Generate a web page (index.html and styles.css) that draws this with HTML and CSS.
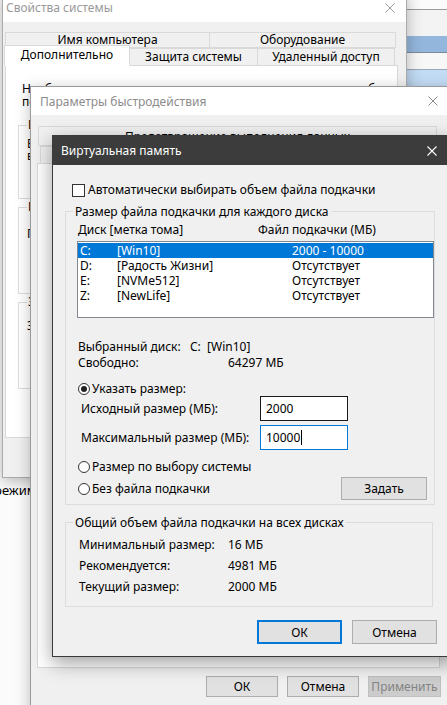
FILE: index.html
```html
<!DOCTYPE html>
<html lang="ru">
<head>
<meta charset="utf-8">
<title>Виртуальная память</title>
<link rel="stylesheet" href="styles.css">
</head>
<body>
<div class="desk">

  <div class="back-left"><span class="back-text">режим</span></div>

  <div class="back-right">
    <div class="strip strip-white"></div>
    <div class="strip strip-gray"></div>
    <div class="strip strip-blue"></div>
    <div class="strip strip-white2"></div>
    <div class="strip strip-lightblue"></div>
  </div>

  <!-- Свойства системы -->
  <div class="win win-sys">
    <div class="titlebar titlebar-inactive">
      <span class="title">Свойства системы</span>
      <svg class="close close-sys" width="10" height="10" viewBox="0 0 10 10"><path d="M0.5 0.5L9.5 9.5M9.5 0.5L0.5 9.5" stroke="#9a9a9a" stroke-width="1" fill="none"/></svg>
    </div>
    <div class="sys-body">
      <div class="tabrow tabrow-1">
        <div class="tab tab-name">Имя компьютера</div>
        <div class="tab tab-hw">Оборудование</div>
      </div>
      <div class="tabrow tabrow-2">
        <div class="tab tab-adv tab-selected">Дополнительно</div>
        <div class="tab tab-prot">Защита системы</div>
        <div class="tab tab-remote">Удаленный доступ</div>
      </div>
      <div class="sys-panel">
        <p class="sys-note">Необходимо иметь права администратора для изменения большинства<br>перечисленных параметров.</p>
        <fieldset class="sys-group sys-group-1">
          <legend>Быстродействие</legend>
          <p>Визуальные эффекты, использование процессора, оперативной и<br>виртуальной памяти</p>
        </fieldset>
        <fieldset class="sys-group sys-group-2">
          <legend>Профили пользователей</legend>
          <p>Параметры рабочего стола, относящиеся ко входу в систему</p>
        </fieldset>
        <fieldset class="sys-group sys-group-3">
          <legend>Загрузка и восстановление</legend>
          <p>Загрузка и восстановление системы, отладочная информация</p>
        </fieldset>
      </div>
    </div>
  </div>

  <!-- Параметры быстродействия -->
  <div class="win win-perf">
    <div class="titlebar titlebar-inactive perf-title">
      <span class="title">Параметры быстродействия</span>
      <svg class="close close-perf" width="10" height="10" viewBox="0 0 10 10"><path d="M0.5 0.5L9.5 9.5M9.5 0.5L0.5 9.5" stroke="#8a8a8a" stroke-width="1" fill="none"/></svg>
    </div>
    <div class="perf-body">
      <div class="tab perf-tab-top">Предотвращение выполнения данных</div>
      <div class="tabrow perf-tabrow">
        <div class="tab perf-tab-vis">Визуальные эффекты</div>
        <div class="tab perf-tab-adv tab-selected">Дополнительно</div>
      </div>
      <div class="perf-panel"></div>
      <div class="perf-buttons">
        <button class="btn perf-btn">ОК</button>
        <button class="btn perf-btn">Отмена</button>
        <button class="btn perf-btn perf-btn-apply btn-disabled">Применить</button>
      </div>
    </div>
  </div>

  <!-- Виртуальная память -->
  <div class="win win-vm">
    <div class="titlebar vm-title">
      <span class="title">Виртуальная память</span>
      <svg class="close close-vm" width="10" height="10" viewBox="0 0 10 10"><path d="M0.5 0.5L9.5 9.5M9.5 0.5L0.5 9.5" stroke="#ffffff" stroke-width="1.1" fill="none"/></svg>
    </div>
    <div class="vm-body">
      <div class="check-row">
        <span class="checkbox"></span>
        <span class="check-label">Автоматически выбирать объем файла подкачки</span>
      </div>

      <fieldset class="group group-disks">
        <legend>Размер файла подкачки для каждого диска</legend>
        <div class="list-head">
          <span class="col-disk-head">Диск [метка тома]</span>
          <span>Файл подкачки (МБ)</span>
        </div>
        <div class="listbox">
          <div class="list-row list-row-selected"><span>C:</span><span>[Win10]</span><span>2000 - 10000</span></div>
          <div class="list-row"><span>D:</span><span>[Радость Жизни]</span><span>Отсутствует</span></div>
          <div class="list-row"><span>E:</span><span>[NVMe512]</span><span>Отсутствует</span></div>
          <div class="list-row"><span>Z:</span><span>[NewLife]</span><span>Отсутствует</span></div>
        </div>

        <div class="info-row info-row-first">
          <span class="info-label-sel">Выбранный диск:</span>
          <span>C:&nbsp;&nbsp;[Win10]</span>
        </div>
        <div class="info-row">
          <span class="info-label-free">Свободно:</span>
          <span>64297 МБ</span>
        </div>

        <div class="radio-row radio-row-custom">
          <span class="radio radio-on"></span>
          <span class="radio-label">Указать размер:</span>
        </div>
        <div class="field-row field-row-initial">
          <span class="field-label">Исходный размер (МБ):</span>
          <div class="input input-hover">2000</div>
        </div>
        <div class="field-row field-row-max">
          <span class="field-label">Максимальный размер (МБ):</span>
          <div class="input input-focus">10000<span class="caret"></span></div>
        </div>

        <div class="bottom-area">
          <div class="radio-col">
            <div class="radio-row radio-row-low">
              <span class="radio"></span>
              <span class="radio-label">Размер по выбору системы</span>
            </div>
            <div class="radio-row radio-row-low">
              <span class="radio"></span>
              <span class="radio-label">Без файла подкачки</span>
            </div>
          </div>
          <button class="btn set-btn">Задать</button>
        </div>
      </fieldset>

      <fieldset class="group group-total">
        <legend>Общий объем файла подкачки на всех дисках</legend>
        <div class="total-row total-row-first"><span class="total-label">Минимальный размер:</span><span>16 МБ</span></div>
        <div class="total-row"><span class="total-label">Рекомендуется:</span><span>4981 МБ</span></div>
        <div class="total-row"><span class="total-label">Текущий размер:</span><span>2000 МБ</span></div>
      </fieldset>

      <div class="vm-buttons">
        <button class="btn vm-btn btn-default">ОК</button>
        <button class="btn vm-btn">Отмена</button>
      </div>
    </div>
  </div>

</div>
</body>
</html>
```

FILE: styles.css
```css
* { box-sizing: border-box; }

html, body {
  margin: 0;
  padding: 0;
}

body {
  width: 447px;
  height: 705px;
  overflow: hidden;
  font-family: "Noto Sans", "DejaVu Sans", sans-serif;
  font-size: 12px;
  color: #000;
  background: #fbfbfb;
}

p { margin: 0; }

.desk {
  position: relative;
  width: 447px;
  height: 705px;
  overflow: hidden;
  background: #fbfbfb;
}

/* ---------- background windows ---------- */
.back-left {
  position: absolute;
  z-index: 0;
  left: 0;
  top: 478px;
  width: 80px;
  height: 227px;
  background: #fbfbfb;
  padding-top: 4px;
  font-size: 13px;
  line-height: 16px;
  white-space: nowrap;
}
.back-text { display: inline-block; margin-left: -6px; }

.back-right {
  position: absolute;
  z-index: 0;
  left: 400px;
  top: 0;
  width: 60px;
  height: 90px;
  display: flex;
  flex-direction: column;
}
.strip { width: 100%; }
.strip-white { height: 10px; background: #fbfbfb; border-bottom: 1px solid #9c9c9c; }
.strip-gray { height: 26px; background: #f3f3f3; }
.strip-blue { height: 17px; background: #93b6dc; border-bottom: 1px solid #7f8a96; }
.strip-white2 { height: 17px; background: #f7f7f7; border-bottom: 1px solid #9aa6b4; }
.strip-lightblue { height: 20px; background: #c3dcf6; }

/* ---------- generic window ---------- */
.win {
  position: absolute;
  display: flex;
  flex-direction: column;
  background: #f0f0f0;
}

.titlebar {
  display: flex;
  align-items: center;
  justify-content: space-between;
  flex: none;
  white-space: nowrap;
}
.titlebar-inactive { background: #fff; color: #999; }
.title { font-size: 12px; }
.close { display: block; flex: none; }

.tabrow { display: flex; align-items: flex-end; }
.tab {
  background: #f0f0f0;
  border: 1px solid #d9d9d9;
  text-align: center;
  white-space: nowrap;
  line-height: 14px;
}
.tab-selected {
  background: #fff;
  border-bottom-color: #fff;
}

.btn {
  font-family: inherit;
  font-size: 12px;
  color: #000;
  background: #e1e1e1;
  border: 1px solid #adadad;
  padding: 0;
  margin: 0;
}
.btn-disabled { background: #cccccc; border-color: #bfbfbf; color: #838383; }
.btn-default { border: 2px solid #0078d7; }

/* ---------- Свойства системы ---------- */
.win-sys {
  z-index: 1;
  left: 2px;
  top: -8px;
  width: 405px;
  height: 486px;
  border: 1px solid #aaaaaa;
  box-shadow: 0 3px 14px rgba(0, 0, 0, 0.28);
}
.win-sys .titlebar { height: 29px; padding-left: 3px; }
.close-sys { margin-right: 11px; }

.sys-body { padding-left: 2px; }
.tabrow-1 { margin-top: 10px; height: 16px; }
.tabrow-1 .tab { height: 16px; }
.tab-name { width: 205px; }
.tab-hw { width: 187px; margin-left: -1px; }

.tabrow-2 { margin-top: -1px; height: 19px; }
.tabrow-2 .tab { height: 18px; line-height: 16px; }
.tab-adv { width: 126px; height: 21px !important; margin-left: -1px; position: relative; z-index: 1; line-height: 18px !important; }
.tab-prot { width: 129px; margin-left: -1px; }
.tab-remote { width: 138px; margin-left: -1px; }

.sys-panel {
  margin-top: -1px;
  width: 393px;
  height: 373px;
  background: #fff;
  border: 1px solid #d9d9d9;
  padding: 16px 0 0 12px;
  white-space: nowrap;
}
.sys-note { line-height: 13px; padding-left: 4px; }

.sys-group {
  margin: 0;
  width: 372px;
  border: 1px solid #dcdcdc;
  padding: 6px 0 0 8px;
  line-height: 12px;
}
.sys-group legend { padding: 0 1px; margin-left: 0; line-height: 14px; }
.sys-group-1 { margin-top: 10px; height: 81px; }
.sys-group-2 { margin-top: 1px; height: 94px; padding-top: 14px; }
.sys-group-3 { margin-top: 1px; height: 94px; padding-top: 11px; }

/* ---------- Параметры быстродействия ---------- */
.win-perf {
  z-index: 2;
  left: 30px;
  top: 86px;
  width: 425px;
  height: 640px;
  border: 1px solid #9a9a9a;
  box-shadow: 0 3px 14px rgba(0, 0, 0, 0.25);
}
.perf-title { height: 28px; padding-left: 9px; color: #8c8c8c; }
.close-perf { margin-right: 16px; }

.perf-body { display: flex; flex-direction: column; }
.perf-tab-top {
  margin: 11px 0 0 7px;
  width: 399px;
  height: 20px;
  line-height: 19px;
}
.perf-tabrow { margin: -1px 0 0 9px; height: 19px; }
.perf-tabrow .tab { height: 18px; line-height: 16px; }
.perf-tab-vis { width: 150px; }
.perf-tab-adv { width: 130px; margin-left: -1px; height: 20px !important; position: relative; z-index: 1; }

.perf-panel {
  margin: -1px 0 0 6px;
  width: 403px;
  height: 505px;
  background: #fff;
  border: 1px solid #d9d9d9;
}
.perf-buttons {
  margin-top: 8px;
  width: 410px;
  display: flex;
  justify-content: flex-end;
  gap: 9px;
}
.perf-btn { width: 72px; height: 21px; }
.perf-btn-apply { width: 73px; }

/* ---------- Виртуальная память ---------- */
.win-vm {
  z-index: 3;
  left: 52px;
  top: 135px;
  width: 404px;
  height: 522px;
  border: 1px solid #3a3a3a;
  box-shadow: 0 6px 18px rgba(0, 0, 0, 0.38);
}
.vm-title {
  height: 29px;
  background: #3c3c3c;
  color: #fff;
  padding-left: 8px;
}
.close-vm { margin-right: 18px; }

.vm-body { padding-left: 12px; display: flex; flex-direction: column; }

.check-row {
  margin-top: 17px;
  height: 16px;
  padding-left: 7px;
  display: flex;
  align-items: center;
  white-space: nowrap;
}
.checkbox {
  width: 13px;
  height: 13px;
  border: 1px solid #333;
  background: #fff;
  flex: none;
}
.check-label { margin-left: 3px; line-height: 16px; }

.group {
  margin: 0;
  width: 368px;
  border: 1px solid #dcdcdc;
  padding: 0 0 4px 11px;
  white-space: nowrap;
}
.group legend {
  padding: 0 2px;
  margin-left: -4px;
  line-height: 15px;
}
.group-disks { margin-top: 6px; }
.group-total { margin-top: 10px; padding-bottom: 9px; }

.list-head {
  margin-top: 3px;
  height: 16px;
  line-height: 16px;
  padding-left: 1px;
  display: flex;
}
.col-disk-head { width: 180px; }

.listbox {
  margin-top: 3px;
  width: 357px;
  height: 77px;
  background: #fff;
  border: 1px solid #828790;
  padding-top: 1px;
}
.list-row {
  height: 15px;
  line-height: 15px;
  display: grid;
  grid-template-columns: 37px 175px 1fr;
  padding-left: 2px;
}
.list-row-selected { background: #0078d7; color: #fff; }

.info-row {
  height: 16px;
  line-height: 16px;
  padding-left: 1px;
  display: flex;
}
.info-row-first { margin-top: 21px; }
.info-label-sel { width: 112px; }
.info-label-free { width: 150px; }

.radio-row {
  display: flex;
  align-items: center;
  padding-left: 1px;
}
.radio-row-custom { margin-top: 10px; height: 16px; }
.radio-row-low { height: 22px; }
.radio {
  position: relative;
  width: 12px;
  height: 12px;
  border: 1px solid #333;
  border-radius: 50%;
  background: #fff;
  flex: none;
}
.radio-on::after {
  content: "";
  position: absolute;
  left: 2px;
  top: 2px;
  width: 6px;
  height: 6px;
  border-radius: 50%;
  background: #222;
}
.radio-label { margin-left: 2px; line-height: 16px; }

.field-row {
  display: flex;
  align-items: center;
  padding-left: 4px;
  height: 25px;
}
.field-row-initial { margin-top: -1px; }
.field-row-max { margin-top: 4px; }
.field-label { width: 179px; }
.input {
  width: 88px;
  height: 25px;
  background: #fff;
  padding-left: 5px;
  line-height: 23px;
  display: flex;
  align-items: center;
}
.input-hover { border: 1px solid #1a1a1a; }
.input-focus { border: 1px solid #0078d7; }
.caret { display: inline-block; width: 1px; height: 15px; background: #000; margin-left: 1px; }

.bottom-area {
  margin-top: 6px;
  display: flex;
  justify-content: space-between;
  align-items: flex-end;
  padding-right: 7px;
}
.set-btn { width: 86px; height: 23px; }

.total-row {
  height: 21px;
  line-height: 21px;
  display: flex;
  padding-left: 2px;
}
.total-row-first { margin-top: 4px; }
.total-label { width: 149px; }

.vm-buttons {
  margin-top: 13px;
  width: 372px;
  display: flex;
  justify-content: flex-end;
  gap: 10px;
}
.vm-btn { width: 85px; height: 24px; }
```
